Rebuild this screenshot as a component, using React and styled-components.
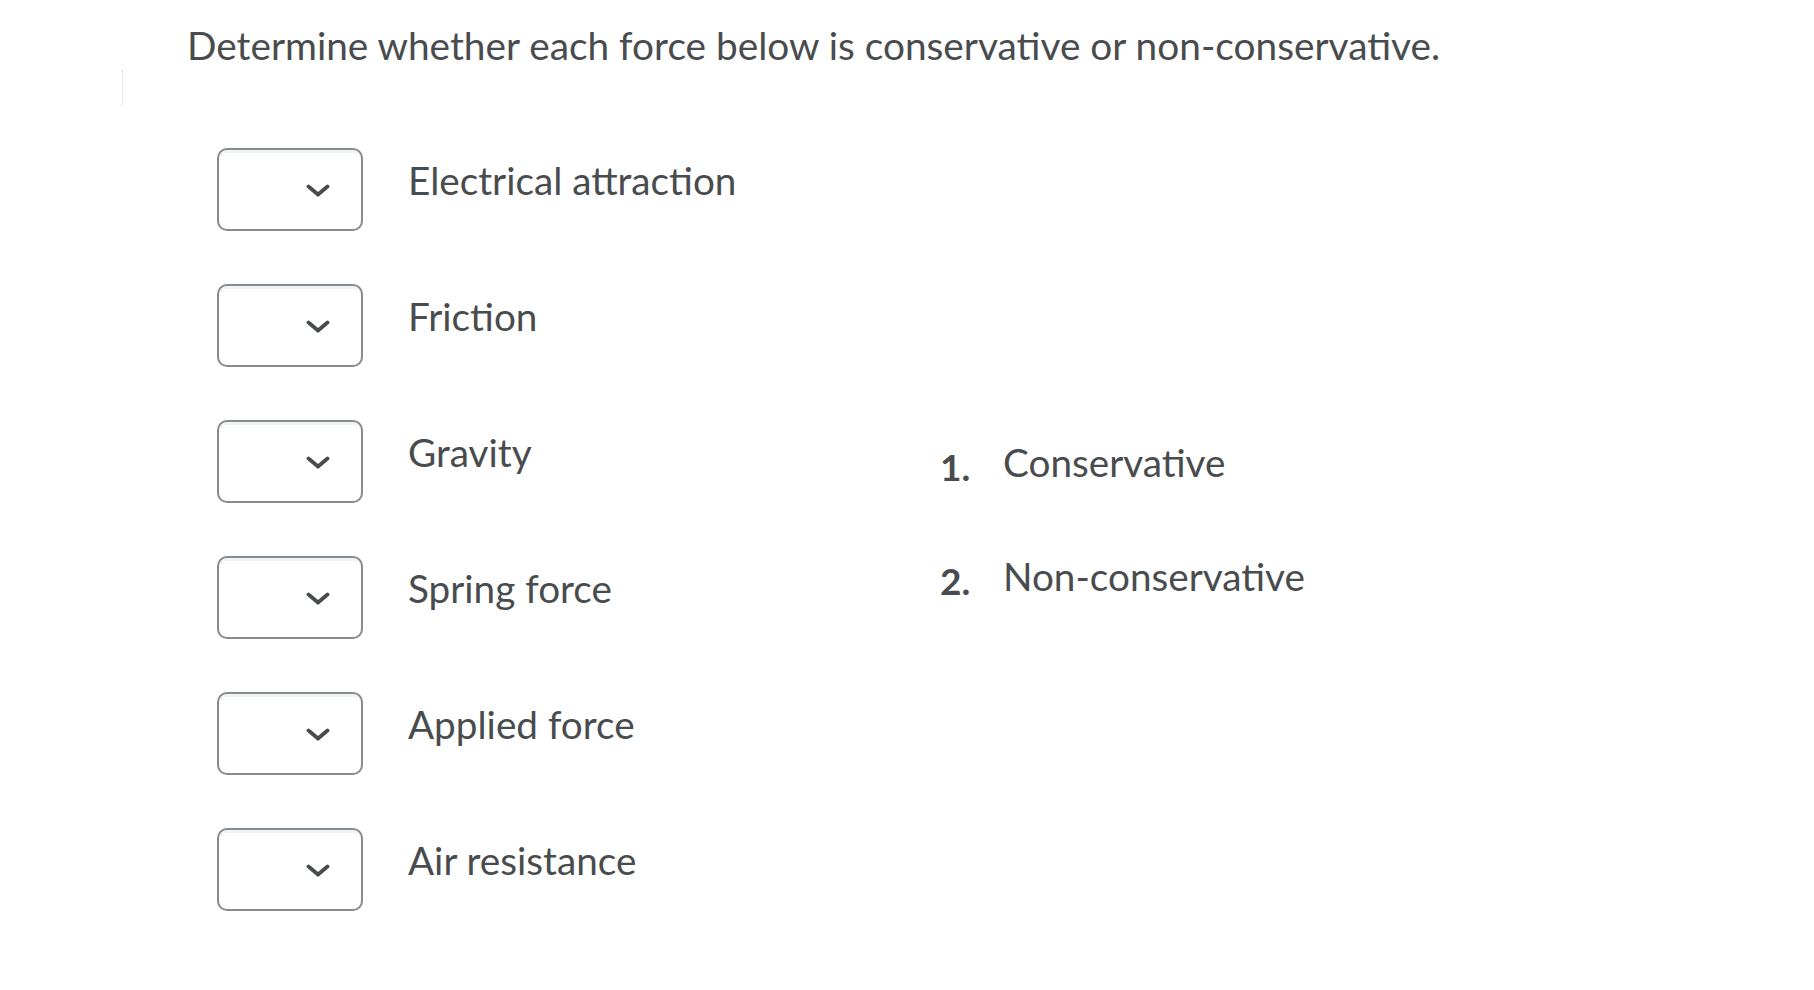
import React from 'react';
import styled, { createGlobalStyle } from 'styled-components';

const GlobalStyle = createGlobalStyle`
  html, body {
    margin: 0;
    padding: 0;
    background: #ffffff;
  }
  body {
    font-family: Lato, "Noto Sans", "Liberation Sans", sans-serif;
    color: #494c4e;
  }
`;

const Page = styled.div`
  width: 1814px;
  height: 990px;
  padding-top: 22px;
  box-sizing: border-box;
`;

const Title = styled.h1`
  margin: 0 0 0 187px;
  font-size: 38.8px;
  font-weight: 400;
  line-height: 1.2;
`;

const Rule = styled.div`
  width: 1px;
  height: 37px;
  margin: 0 0 42px 122px;
  background: #e3e5e8;
`;

const Main = styled.div`
  display: flex;
  align-items: center;
  padding-left: 217px;
`;

const Questions = styled.div`
  width: 723px;
  display: flex;
  flex-direction: column;
  gap: 53px;
`;

const Row = styled.div`
  display: flex;
  align-items: flex-start;
  gap: 45px;
`;

const Select = styled.div`
  flex: none;
  width: 146px;
  height: 83px;
  box-sizing: border-box;
  border: 2px solid #868b8e;
  border-radius: 10px;
  background: #fff;
  box-shadow: inset 0 3px 0 rgba(185, 194, 208, 0.2);
  display: flex;
  align-items: center;
  justify-content: flex-end;
  padding: 3px 31px 0 0;
`;

const Label = styled.div`
  padding-top: 9px;
  font-size: 38.7px;
  line-height: 1.2;
`;

const Options = styled.ol`
  list-style: none;
  margin: 0 0 16px 0;
  padding: 0;
  display: flex;
  flex-direction: column;
  gap: 64px;
`;

const Option = styled.li`
  display: flex;
  align-items: flex-start;
  font-size: 38.7px;
  line-height: 1.2;
`;

const Num = styled.span`
  flex: none;
  width: 63px;
  margin-top: 6px;
  font-weight: 700;
  font-size: 37px;
`;

const Chevron = () => (
  <svg width="24" height="13" viewBox="0 0 24 13" fill="none">
    <polyline
      points="2.5,2.5 12,10.5 21.5,2.5"
      stroke="#494c4e"
      strokeWidth="3.8"
      strokeLinecap="round"
      strokeLinejoin="round"
    />
  </svg>
);

const forces = [
  'Electrical attraction',
  'Friction',
  'Gravity',
  'Spring force',
  'Applied force',
  'Air resistance',
];

const choices = ['Conservative', 'Non-conservative'];

export default function App() {
  return (
    <Page>
      <GlobalStyle />
      <Title>Determine whether each force below is conservative or non-conservative.</Title>
      <Rule />
      <Main>
        <Questions>
          {forces.map((f) => (
            <Row key={f}>
              <Select>
                <Chevron />
              </Select>
              <Label>{f}</Label>
            </Row>
          ))}
        </Questions>
        <Options>
          {choices.map((c, i) => (
            <Option key={c}>
              <Num>{i + 1}.</Num>
              <span>{c}</span>
            </Option>
          ))}
        </Options>
      </Main>
    </Page>
  );
}
